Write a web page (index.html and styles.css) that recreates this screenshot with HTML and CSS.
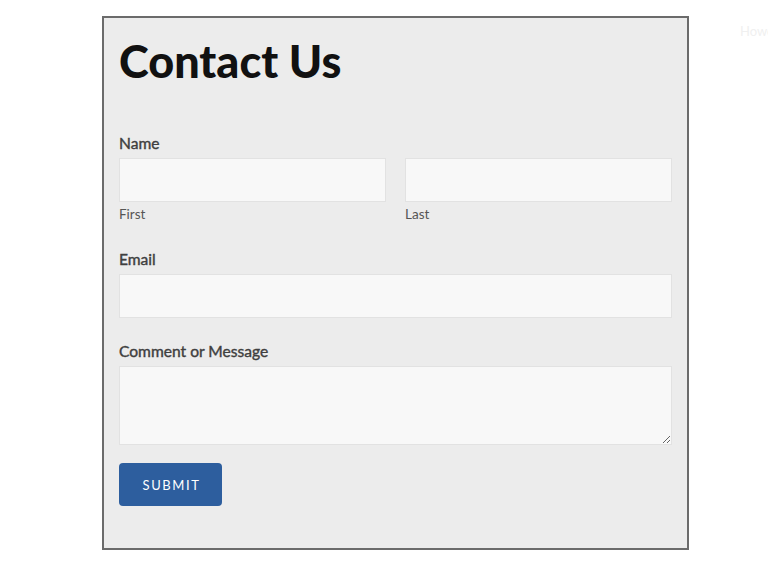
FILE: index.html
```html
<!DOCTYPE html>
<html>
<head>
<meta charset="utf-8">
<link rel="stylesheet" href="styles.css">
</head>
<body>
<div class="page">
  <section class="card">
    <h1 class="title">Contact Us</h1>
    <form class="form">
      <div class="field">
        <label class="label">Name</label>
        <div class="name-row">
          <div class="sub">
            <input class="input" type="text">
            <span class="hint">First</span>
          </div>
          <div class="sub">
            <input class="input" type="text">
            <span class="hint">Last</span>
          </div>
        </div>
      </div>
      <div class="field">
        <label class="label">Email</label>
        <input class="input" type="email">
      </div>
      <div class="field">
        <label class="label">Comment or Message</label>
        <textarea class="input textarea"></textarea>
      </div>
      <button class="submit" type="button">SUBMIT</button>
    </form>
  </section>
  <div class="side">However</div>
</div>
</body>
</html>
```
FILE: styles.css
```css
html, body {
  margin: 0;
  padding: 0;
  background: #ffffff;
}
body {
  font-family: Lato, "Liberation Sans", sans-serif;
  overflow: hidden;
}
.page {
  display: flex;
  align-items: flex-start;
  padding: 16px 0 0 102px;
  width: 768px;
  box-sizing: border-box;
  overflow: hidden;
}
.card {
  flex: none;
  width: 587px;
  height: 534px;
  box-sizing: border-box;
  border: 2px solid #6b6b6b;
  background: #ececec;
  padding: 0 15px;
}
.title {
  margin: 21px 0 0;
  font-family: Lato, "DejaVu Sans", sans-serif;
  font-weight: 900;
  font-size: 45px;
  line-height: 44px;
  color: #111;
  letter-spacing: 0;
}
.form {
  display: flex;
  flex-direction: column;
  margin-top: 50px;
}
.field {
  display: flex;
  flex-direction: column;
  margin-bottom: 23px;
}
.field:first-child {
  margin-bottom: 26px;
}
.label {
  font-weight: 400;
  font-size: 15.6px;
  line-height: 20px;
  color: #3f3f3f;
  -webkit-text-stroke: 0.4px #3f3f3f;
  margin-bottom: 5px;
}
.name-row {
  display: flex;
  gap: 19px;
}
.sub {
  flex: 1;
  display: flex;
  flex-direction: column;
}
.input {
  display: block;
  height: 44px;
  box-sizing: border-box;
  border: 1px solid #e2e2e2;
  background: #f8f8f8;
  border-radius: 0;
  margin: 0;
  padding: 0 10px;
  font-family: inherit;
  width: 100%;
}
.textarea {
  height: 79px;
  resize: vertical;
}
.hint {
  font-size: 13.5px;
  line-height: 18px;
  color: #555;
  margin-top: 3px;
}
.submit {
  align-self: flex-start;
  width: 103px;
  height: 43px;
  border: none;
  border-radius: 4px;
  background: #2d5e9e;
  color: #fff;
  font-family: Lato, sans-serif;
  font-size: 13px;
  letter-spacing: 1.6px;
  margin-top: -5px;
  padding: 0 0 0 2px;
}
.side {
  flex: none;
  margin: 7px 0 0 51px;
  font-size: 13px;
  color: #f0f0f0;
  white-space: nowrap;
}
```
